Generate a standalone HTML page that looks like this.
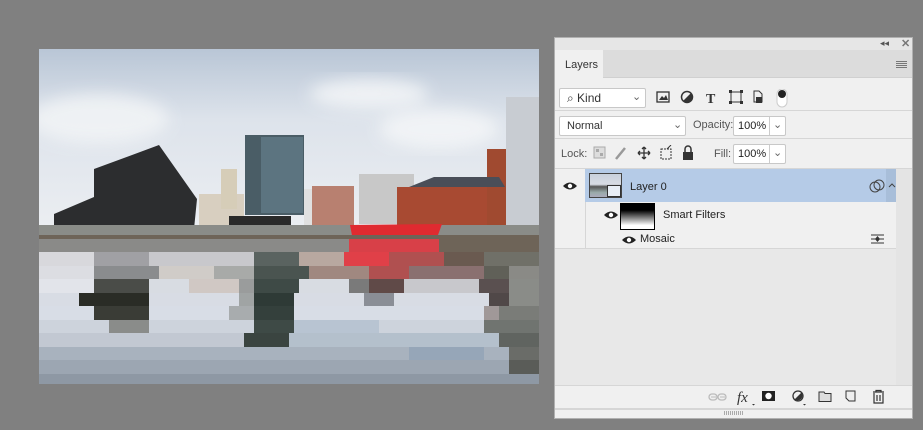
<!DOCTYPE html>
<html><head><meta charset="utf-8"><style>
*{margin:0;padding:0;box-sizing:border-box}
body{width:923px;height:430px;background:#808080;position:relative;overflow:hidden;font-family:"Liberation Sans",sans-serif;font-size:11px;color:#222}
.a{position:absolute}
.box{position:absolute;background:#fff;border:1px solid #c8c8c8;border-radius:2px}
.t{position:absolute;white-space:nowrap}
</style></head><body>
<svg class="a" style="left:39px;top:49px" width="500" height="335" viewBox="0 0 500 335">
<defs><linearGradient id="sky" x1="0" y1="0" x2="0" y2="1"><stop offset="0" stop-color="#b9c6d6"/><stop offset=".35" stop-color="#dde3eb"/><stop offset="1" stop-color="#eef0f3"/></linearGradient>
<filter id="bl"><feGaussianBlur stdDeviation="8"/></filter></defs>
<rect width="500" height="200" fill="url(#sky)"/>
<g filter="url(#bl)" opacity=".85"><ellipse cx="330" cy="45" rx="60" ry="15" fill="#f4f6f8"/><ellipse cx="60" cy="70" rx="70" ry="25" fill="#f2f4f6"/><ellipse cx="400" cy="80" rx="60" ry="20" fill="#f4f6f8"/></g>
<g shape-rendering="crispEdges">
<rect x="160" y="145" width="45" height="35" fill="#d8cfc0"/>
<rect x="182" y="120" width="16" height="40" fill="#d6cdb8"/>
</g>
<polygon points="15,165 55,148 55,120 120,96 158,150 155,180 15,180" fill="#2c2d2f"/>
<g shape-rendering="crispEdges">
<rect x="190" y="167" width="62" height="16" fill="#2a2a2a"/>
<rect x="206" y="86" width="59" height="80" fill="#4a5d66"/>
<rect x="222" y="88" width="42" height="76" fill="#5c7480"/>
<rect x="265" y="140" width="8" height="40" fill="#e0e0e0"/>
<rect x="273" y="137" width="42" height="43" fill="#b88070"/>
<rect x="320" y="125" width="55" height="50" fill="#c8c8c8"/>
<rect x="358" y="138" width="108" height="42" fill="#a84a32"/>
<rect x="448" y="100" width="20" height="80" fill="#a04a30"/>
<rect x="467" y="48" width="33" height="132" fill="#c8ccd2"/>
<rect x="0" y="176" width="500" height="10" fill="#8a8c88"/>
</g>
<polygon points="370,138 395,128 460,128 466,138" fill="#4a4e58"/>
<polygon points="311,176 403,175 395,197 315,197" fill="#e02a30"/>
<g shape-rendering="crispEdges">
<rect x="0" y="186" width="500" height="17" fill="#6e6458"/>
<rect x="0" y="190" width="310" height="13" fill="#8a8a88"/>
<rect x="310" y="190" width="90" height="13" fill="#d84048"/>
<rect x="0" y="203" width="500" height="14" fill="#c8c8cc"/>
<rect x="0" y="203" width="55" height="14" fill="#d8d8dc"/><rect x="55" y="203" width="55" height="14" fill="#a0a0a4"/><rect x="215" y="203" width="45" height="14" fill="#5a6360"/><rect x="260" y="203" width="45" height="14" fill="#b8a8a0"/><rect x="305" y="203" width="45" height="14" fill="#e04048"/><rect x="350" y="203" width="55" height="14" fill="#b05050"/><rect x="405" y="203" width="40" height="14" fill="#6a5a50"/><rect x="445" y="203" width="55" height="14" fill="#707068"/>
<rect x="0" y="217" width="55" height="13" fill="#dcdde2"/><rect x="55" y="217" width="65" height="13" fill="#8a8c8e"/><rect x="120" y="217" width="55" height="13" fill="#d0ccc8"/><rect x="175" y="217" width="40" height="13" fill="#a8aaa8"/><rect x="215" y="217" width="55" height="13" fill="#4a5450"/><rect x="270" y="217" width="60" height="13" fill="#a08880"/><rect x="330" y="217" width="40" height="13" fill="#b05050"/><rect x="370" y="217" width="75" height="13" fill="#8a7070"/><rect x="445" y="217" width="25" height="13" fill="#606058"/><rect x="470" y="217" width="30" height="13" fill="#8a8a86"/>
<rect x="0" y="230" width="500" height="14" fill="#d8dce2"/><rect x="0" y="230" width="55" height="14" fill="#e2e4ea"/><rect x="55" y="230" width="55" height="14" fill="#4a4c48"/><rect x="150" y="230" width="50" height="14" fill="#d0c8c4"/><rect x="200" y="230" width="15" height="14" fill="#9a9c9c"/><rect x="215" y="230" width="45" height="14" fill="#3e4a46"/><rect x="310" y="230" width="20" height="14" fill="#7a7a7a"/><rect x="330" y="230" width="35" height="14" fill="#604a48"/><rect x="365" y="230" width="75" height="14" fill="#c8c8cc"/><rect x="440" y="230" width="30" height="14" fill="#5a5050"/><rect x="470" y="230" width="30" height="14" fill="#8a8c88"/>
<rect x="0" y="244" width="500" height="13" fill="#d8dce4"/><rect x="40" y="244" width="70" height="13" fill="#2a2c26"/><rect x="200" y="244" width="15" height="13" fill="#a0a4a4"/><rect x="215" y="244" width="40" height="13" fill="#2e3a36"/><rect x="325" y="244" width="30" height="13" fill="#8a8e96"/><rect x="450" y="244" width="20" height="13" fill="#504848"/><rect x="470" y="244" width="30" height="13" fill="#8a8c88"/>
<rect x="0" y="257" width="500" height="14" fill="#d8dde6"/><rect x="55" y="257" width="55" height="14" fill="#3a3c36"/><rect x="190" y="257" width="25" height="14" fill="#a8acae"/><rect x="215" y="257" width="40" height="14" fill="#34403c"/><rect x="445" y="257" width="15" height="14" fill="#a09898"/><rect x="460" y="257" width="40" height="14" fill="#7a7c78"/>
<rect x="0" y="271" width="500" height="13" fill="#cdd3dc"/><rect x="70" y="271" width="40" height="13" fill="#8a8c8a"/><rect x="215" y="271" width="40" height="13" fill="#3e4a46"/><rect x="255" y="271" width="85" height="13" fill="#b8c4d2"/><rect x="445" y="271" width="55" height="13" fill="#707470"/>
<rect x="0" y="284" width="500" height="14" fill="#c2c8d2"/><rect x="205" y="284" width="45" height="14" fill="#3a4440"/><rect x="250" y="284" width="210" height="14" fill="#b4c0cc"/><rect x="460" y="284" width="40" height="14" fill="#606460"/>
<rect x="0" y="298" width="500" height="13" fill="#a8b2be"/><rect x="370" y="298" width="75" height="13" fill="#96a6b8"/><rect x="470" y="298" width="30" height="13" fill="#6a6c68"/>
<rect x="0" y="311" width="500" height="14" fill="#9ca6b2"/><rect x="470" y="311" width="30" height="14" fill="#5a5c58"/>
<rect x="0" y="325" width="500" height="10" fill="#8e98a4"/>
</g>
</svg>

<div class="a" style="left:554px;top:37px;width:359px;height:382px;background:#f0f0f0;border:1px solid #b0b0b0"></div>
<div class="a" style="left:555px;top:38px;width:357px;height:12px;background:#e6e6e6"></div>
<div class="t" style="left:880px;top:38px;font-size:9px;color:#555">◂◂</div>
<div class="t" style="left:901px;top:37px;font-size:11px;color:#777;font-weight:bold">✕</div>
<div class="a" style="left:555px;top:50px;width:357px;height:28px;background:#dcdcdc;border-bottom:1px solid #d0d0d0"></div>
<div class="a" style="left:555px;top:50px;width:48px;height:29px;background:#f0f0f0"></div>
<div class="t" style="left:565px;top:59px;color:#333">Layers</div>
<div class="a" style="left:896px;top:61px;width:11px;height:1px;background:#777;box-shadow:0 2px #777,0 4px #777,0 6px #777"></div>

<div class="box" style="left:559px;top:88px;width:87px;height:20px"></div>
<div class="t" style="left:567px;top:91px;font-size:12px;color:#333">⌕ Kind</div>
<div class="t" style="left:632px;top:90px;color:#666">⌄</div>
<svg class="a" style="left:655px;top:89px" width="135" height="20">
<rect x="2" y="3" width="12" height="10" fill="none" stroke="#333" stroke-width="1.3"/><path d="M4 11 L7 7 L9 9 L11 6 L13 11Z" fill="#333"/>
<circle cx="32" cy="8" r="5.5" fill="none" stroke="#333" stroke-width="1.5"/><path d="M36 4 A5.5 5.5 0 0 1 28 12Z" fill="#333"/>
<text x="51" y="14" font-family="Liberation Serif" font-weight="bold" font-size="14" fill="#333">T</text>
<rect x="76" y="3" width="10" height="10" fill="none" stroke="#333"/><rect x="74" y="1" width="3" height="3" fill="#333"/><rect x="85" y="1" width="3" height="3" fill="#333"/><rect x="74" y="12" width="3" height="3" fill="#333"/><rect x="85" y="12" width="3" height="3" fill="#333"/>
<path d="M99 2h5l3 3v8h-8z" fill="none" stroke="#333"/><rect x="101" y="8" width="6" height="6" fill="#333"/>
<rect x="122" y="0" width="10" height="18" rx="5" fill="#fff" stroke="#ccc"/><circle cx="127" cy="5" r="4" fill="#222"/>
</svg>
<div class="a" style="left:555px;top:110px;width:357px;height:1px;background:#d6d6d6"></div>
<div class="box" style="left:559px;top:116px;width:127px;height:20px"></div>
<div class="t" style="left:567px;top:120px;color:#333">Normal</div>
<div class="t" style="left:673px;top:118px;color:#666">⌄</div>
<div class="t" style="left:693px;top:119px;color:#555">Opacity:</div>
<div class="box" style="left:733px;top:116px;width:53px;height:20px"></div>
<div class="a" style="left:769px;top:117px;width:1px;height:18px;background:#ccc"></div>
<div class="t" style="left:738px;top:120px;color:#222">100%</div>
<div class="t" style="left:773px;top:118px;color:#666">⌄</div>
<div class="a" style="left:555px;top:138px;width:357px;height:1px;background:#d6d6d6"></div>
<div class="t" style="left:561px;top:148px;color:#555">Lock:</div>
<svg class="a" style="left:592px;top:145px" width="110" height="18">
<rect x="2" y="2" width="11" height="11" fill="#ddd" stroke="#aaa"/><rect x="4" y="4" width="3" height="3" fill="#aaa"/><rect x="8" y="8" width="3" height="3" fill="#aaa"/>
<path d="M24 14 L33 3" stroke="#999" stroke-width="2.5"/>
<path d="M52 2v12M46 8h12M52 2l-2 2M52 2l2 2M52 14l-2-2M52 14l2-2M46 8l2-2M46 8l2 2M58 8l-2-2M58 8l-2 2" stroke="#333" stroke-width="1.3" fill="none"/>
<rect x="69" y="4" width="10" height="10" fill="none" stroke="#333" stroke-dasharray="2 1"/><path d="M75 4 L79 0" stroke="#333"/>
<rect x="91" y="7" width="10" height="8" fill="#333"/><path d="M93 7V4a3 3 0 0 1 6 0v3" fill="none" stroke="#333" stroke-width="1.5"/>
</svg>
<div class="t" style="left:714px;top:148px;color:#555">Fill:</div>
<div class="box" style="left:733px;top:144px;width:53px;height:20px"></div>
<div class="a" style="left:769px;top:145px;width:1px;height:18px;background:#ccc"></div>
<div class="t" style="left:738px;top:148px;color:#222">100%</div>
<div class="t" style="left:773px;top:146px;color:#666">⌄</div>

<div class="a" style="left:555px;top:168px;width:357px;height:1px;background:#d6d6d6"></div>
<div class="a" style="left:555px;top:248px;width:341px;height:137px;background:#e8e8e8"></div>
<div class="a" style="left:896px;top:169px;width:16px;height:216px;background:#e4e4e4"></div>
<div class="a" style="left:585px;top:169px;width:301px;height:33px;background:#b5cbe7"></div>
<div class="a" style="left:886px;top:169px;width:10px;height:33px;background:#a8bed9"></div>
<div class="a" style="left:585px;top:202px;width:1px;height:46px;background:#d6d6d6"></div>
<div class="a" style="left:555px;top:248px;width:341px;height:1px;background:#d6d6d6"></div>
<svg class="a" style="left:562px;top:180px" width="16" height="12"><path d="M1 6Q8 -1 15 6Q8 13 1 6Z" fill="#222"/><circle cx="8" cy="6" r="2.2" fill="#fff"/></svg>
<div class="a" style="left:589px;top:173px;width:33px;height:25px;border:1px solid #444;background:linear-gradient(#c8d0dc,#d8dce4 45%,#555 55%,#9aa 80%,#aab)"></div>
<div class="a" style="left:607px;top:185px;width:14px;height:12px;background:#e8eef6;border:1px solid #333"></div>
<div class="t" style="left:630px;top:181px;color:#222">Layer 0</div>
<svg class="a" style="left:869px;top:179px" width="30" height="14"><circle cx="6" cy="8" r="5" fill="none" stroke="#444"/><circle cx="10" cy="6" r="5" fill="none" stroke="#444"/><path d="M20 8l3-3 3 3" fill="none" stroke="#444"/></svg>
<svg class="a" style="left:603px;top:209px" width="16" height="12"><path d="M1 6Q8 -1 15 6Q8 13 1 6Z" fill="#222"/><circle cx="8" cy="6" r="2.2" fill="#fff"/></svg>
<div class="a" style="left:620px;top:203px;width:35px;height:27px;border:1px solid #000;background:linear-gradient(#000 25%,#fff 85%)"></div>
<div class="t" style="left:663px;top:209px;color:#222">Smart Filters</div>
<svg class="a" style="left:621px;top:234px" width="16" height="12"><path d="M1 6Q8 -1 15 6Q8 13 1 6Z" fill="#222"/><circle cx="8" cy="6" r="2.2" fill="#fff"/></svg>
<div class="t" style="left:640px;top:233px;color:#222">Mosaic</div>
<svg class="a" style="left:871px;top:234px" width="14" height="11"><path d="M0 1h13M0 5h13M0 9h13" stroke="#333"/><path d="M4 5l2.5-3 2.5 3z M4 5l2.5 3 2.5-3z" fill="#333"/></svg>

<div class="a" style="left:555px;top:385px;width:357px;height:1px;background:#d6d6d6"></div>
<svg class="a" style="left:708px;top:388px" width="180" height="20">
<path d="M3 9h5M12 9h5" stroke="#bbb"/><rect x="1" y="6" width="8" height="6" rx="3" fill="none" stroke="#bbb" stroke-width="1.3"/><rect x="10" y="6" width="8" height="6" rx="3" fill="none" stroke="#bbb" stroke-width="1.3"/>
<text x="29" y="14" font-family="Liberation Serif" font-style="italic" font-size="15" fill="#333">fx</text><path d="M44 16h3l-1.5 1.5z" fill="#333"/>
<rect x="54" y="3" width="13" height="10" fill="#222"/><circle cx="60.5" cy="8" r="3.2" fill="#fff"/>
<circle cx="90" cy="8" r="5" fill="none" stroke="#333" stroke-width="1.3"/><path d="M93.5 4.5A5 5 0 0 1 86.5 11.5Z" fill="#333"/><path d="M95 16h3l-1.5 1.5z" fill="#333"/>
<path d="M111 4h5l1 1.5h6v8h-12z" fill="#ddd" stroke="#333"/>
<path d="M138 3h9v10h-6l-3-3z" fill="#eee" stroke="#333"/>
<path d="M165 4h11M168 4v-1.5h5V4M166 5v10h9V5M169 7v6M172 7v6" fill="none" stroke="#333" stroke-width="1.2"/>
</svg>
<div class="a" style="left:555px;top:408px;width:357px;height:2px;background:#d6d6d6"></div>
<div class="a" style="left:724px;top:411px;width:20px;height:4px;background:repeating-linear-gradient(90deg,#aaa 0 1px,transparent 1px 2px)"></div>
</body></html>
